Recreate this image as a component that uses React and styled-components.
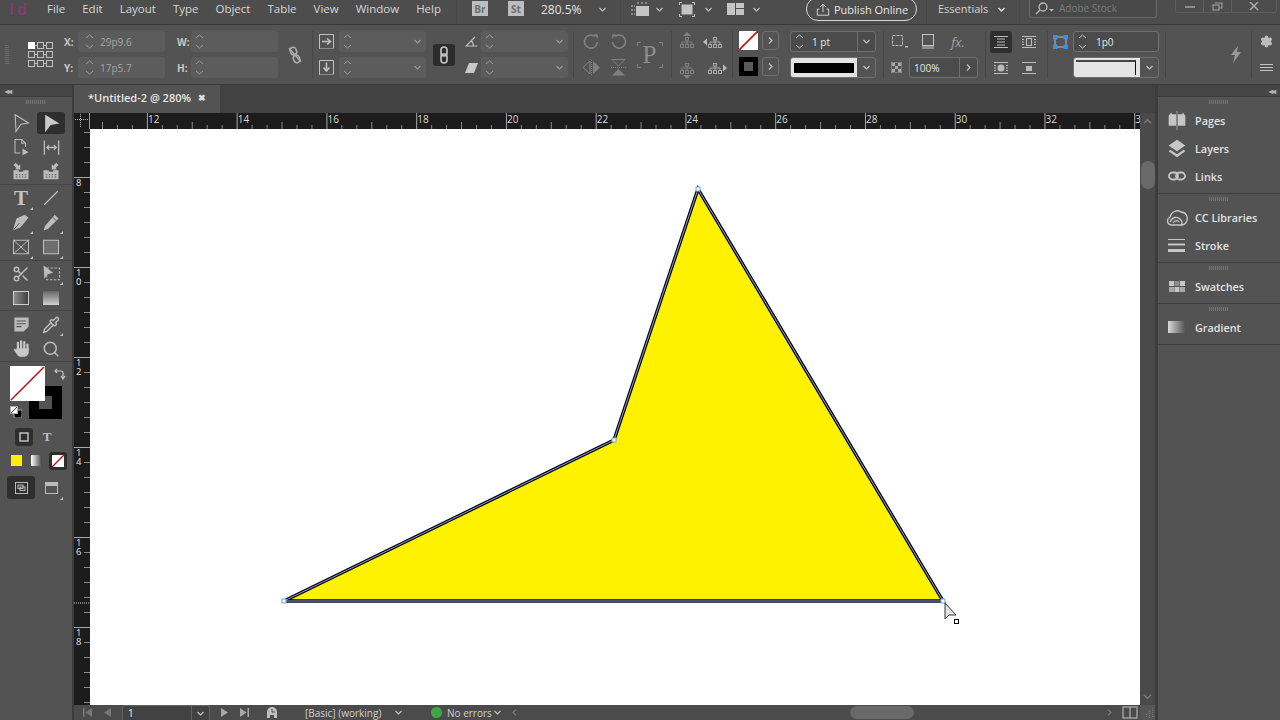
import React from "react";
import styled, { createGlobalStyle } from "styled-components";
import { Scissors, Search, Pipette, Settings } from "lucide-react";

const GlobalStyle = createGlobalStyle`
  html, body {
    margin: 0;
    height: 100%;
    overflow: hidden;
    background: #424242;
    font-family: "Open Sans", "Liberation Sans", sans-serif;
  }
  #root { height: 100%; }
`;

const Page = styled.div`
  width: 1280px;
  height: 720px;
  display: flex;
  flex-direction: column;
  background: #424242;
  overflow: hidden;
`;

/* top menu */
const MenuBar = styled.div`
  height: 24px;
  flex: none;
  display: flex;
  align-items: center;
  background: #4d4d4d;
  border-bottom: 1px solid #383838;
  overflow: hidden;
`;
const Logo = styled.div`
  width: 47px;
  flex: none;
  padding-left: 9px;
  box-sizing: border-box;
  margin-top: -6px;
  font-size: 16px;
  line-height: 1;
  font-weight: 600;
  letter-spacing: 3px;
  color: #8a3a6e;
`;
const Nav = styled.nav`
  width: 409px;
  flex: none;
  display: flex;
  gap: 17px;
  margin-top: -7px;
  font-size: 11.5px;
  color: #d6d6d6;
`;
const Cell = styled.div`
  width: ${(p) => p.$w}px;
  flex: none;
  display: flex;
  align-items: center;
  justify-content: ${(p) => p.$justify || "center"};
  margin-top: ${(p) => p.$up || 0}px;
`;
const Divider = styled.div`
  width: 1px;
  flex: none;
  align-self: stretch;
  margin: 0 ${(p) => p.$r || 0}px 0 ${(p) => p.$l || 0}px;
  background: ${(p) => p.$c || "#474747"};
`;
const AppTile = styled.div`
  width: 16px;
  height: 15px;
  flex: none;
  margin-top: -7px;
  display: flex;
  align-items: center;
  justify-content: center;
  background: #bdbdbd;
  color: #6d6d6d;
  font-size: 10px;
  font-weight: 700;
`;
const ZoomValue = styled.div`
  font-size: 12px;
  color: #e2e2e2;
  margin-top: -6px;
`;
const PublishPill = styled.div`
  width: 111px;
  height: 24px;
  flex: none;
  margin-top: -6px;
  box-sizing: border-box;
  display: flex;
  align-items: center;
  gap: 4px;
  padding-left: 9px;
  border: 1px solid #d8d8d8;
  border-radius: 13px;
  font-size: 11px;
  color: #e4e4e4;
  white-space: nowrap;
`;
const WorkspaceName = styled.div`
  width: 50px;
  flex: none;
  margin-top: -8px;
  font-size: 11px;
  color: #d2d2d2;
  white-space: nowrap;
`;
const StockSearch = styled.div`
  width: 128px;
  height: 18px;
  flex: none;
  margin-top: -7px;
  box-sizing: border-box;
  display: flex;
  align-items: center;
  gap: 4px;
  padding-left: 5px;
  border: 1px solid #6a6a6a;
  border-top: 0;
  border-radius: 0 0 3px 3px;
  background: #494949;
  font-size: 10px;
  color: #7a7a7a;
`;
const WindowButtons = styled.div`
  width: 102px;
  height: 13px;
  flex: none;
  margin-top: -11px;
  box-sizing: border-box;
  display: grid;
  grid-template-columns: 28px 28px 1fr;
  border: 1px solid #5e5e5e;
  border-top: 0;
  border-radius: 0 0 3px 3px;
`;
const WindowButton = styled.div`
  display: flex;
  align-items: center;
  justify-content: center;
  border-right: ${(p) => (p.$last ? "0" : "1px solid #5e5e5e")};
`;

/* control panel */
const ControlBar = styled.div`
  height: 60px;
  flex: none;
  box-sizing: border-box;
  display: flex;
  padding: 6px 0 6px;
  background: #535353;
  border-bottom: 1px solid #3a3a3a;
`;
const Stack = styled.div`
  width: ${(p) => p.$w}px;
  flex: none;
  display: grid;
  grid-template-rows: 21px 21px;
  row-gap: 5px;
`;
const StackItem = styled.div`
  display: flex;
  align-items: center;
  justify-content: ${(p) => p.$justify || "center"};
`;
const Span = styled.div`
  width: ${(p) => p.$w}px;
  flex: none;
  display: flex;
  align-items: center;
  justify-content: ${(p) => p.$justify || "center"};
`;
const Grip = styled.div`
  width: 4px;
  height: ${(p) => p.$h || 20}px;
  margin-left: 5px;
  background: repeating-linear-gradient(to bottom, #6b6b6b 0 1px, transparent 1px 2px);
`;
const Label = styled.div`
  width: 14px;
  font-size: 10px;
  font-weight: 700;
  color: #c8c8c8;
`;
const Field = styled.div`
  width: ${(p) => p.$w}px;
  height: 21px;
  flex: none;
  box-sizing: border-box;
  display: flex;
  align-items: center;
  margin-left: ${(p) => p.$ml || 0}px;
  background: ${(p) => (p.$outline ? "#4b4b4b" : "#5c5c5c")};
  border: ${(p) => (p.$outline ? "1px solid #6f6f6f" : "0")};
  border-radius: 3px;
  font-size: 10px;
  color: ${(p) => (p.$outline ? "#e6e6e6" : "#a5a5a5")};
`;
const SpinBox = styled.div`
  width: ${(p) => p.$w || 16}px;
  flex: none;
  align-self: stretch;
  display: flex;
  align-items: center;
  justify-content: center;
  border-right: ${(p) => (p.$split ? "1px solid #6f6f6f" : "0")};
`;
const FieldText = styled.span`
  flex: 1;
  padding-left: ${(p) => p.$pad ?? 6}px;
  white-space: nowrap;
`;
const FieldEnd = styled.div`
  width: ${(p) => p.$w || 17}px;
  flex: none;
  align-self: stretch;
  display: flex;
  align-items: center;
  justify-content: center;
  border-left: ${(p) => (p.$split ? "1px solid #6f6f6f" : "0")};
`;
const LinkButton = styled.div`
  width: 22px;
  height: 22px;
  display: flex;
  align-items: center;
  justify-content: center;
  background: #2c2c2c;
  border-radius: 3px;
`;
const ActiveIcon = styled.div`
  width: 22px;
  height: 22px;
  display: flex;
  align-items: center;
  justify-content: center;
  background: #2f2f2f;
  border-radius: 3px;
`;
const ProxyLetter = styled.div`
  position: relative;
  width: 26px;
  height: 26px;
  display: flex;
  align-items: center;
  justify-content: center;
  font-family: "Liberation Serif", serif;
  font-size: 25px;
  color: #8c8c8c;
`;
const ProxyCorners = styled.svg`
  position: absolute;
  inset: 0;
`;
const SwatchRow = styled.div`
  display: flex;
  gap: 4px;
`;
const MiniSwatch = styled.div`
  width: 19px;
  height: 19px;
  display: flex;
  align-items: center;
  justify-content: center;
  background: ${(p) => p.$bg};
`;
const InnerSquare = styled.div`
  width: 9px;
  height: 9px;
  background: #5a5a5a;
`;
const ArrowButton = styled.div`
  width: 17px;
  height: 19px;
  box-sizing: border-box;
  display: flex;
  align-items: center;
  justify-content: center;
  border: 1px solid #6f6f6f;
  border-radius: 3px;
`;
const SelectWrap = styled.div`
  width: ${(p) => p.$w}px;
  height: 21px;
  box-sizing: border-box;
  display: flex;
  border: 1px solid #6f6f6f;
  border-radius: 3px;
  overflow: hidden;
`;
const StrokePreview = styled.div`
  flex: 1;
  display: flex;
  align-items: center;
  justify-content: center;
  background: #e4e4e4;
`;
const StrokeBar = styled.div`
  width: 60px;
  height: 10px;
  background: #000;
`;
const CornerPreview = styled.div`
  flex: 1;
  margin: 0;
  background: #e4e4e4;
  position: relative;
  &::after {
    content: "";
    position: absolute;
    left: 2px;
    right: 4px;
    top: 2px;
    bottom: 2px;
    border-top: 2px solid #444;
    border-right: 1px solid #111;
  }
`;
const SelectEnd = styled.div`
  width: 18px;
  display: flex;
  align-items: center;
  justify-content: center;
`;
const RowIcons = styled.div`
  display: flex;
  align-items: center;
`;
const FxGlyph = styled.span`
  font-size: 13px;
  font-style: italic;
  color: #a0a0a0;
`;

/* body */
const Body = styled.div`
  flex: 1;
  min-height: 0;
  display: flex;
`;
const SidePanel = styled.aside`
  width: ${(p) => p.$w}px;
  flex: none;
  display: flex;
  flex-direction: column;
  background: #535353;
`;
const Gutter = styled.div`
  width: ${(p) => p.$w}px;
  flex: none;
  background: #3c3c3c;
`;
const CollapseBar = styled.div`
  height: 11px;
  flex: none;
  display: flex;
  align-items: center;
  justify-content: ${(p) => (p.$right ? "flex-end" : "flex-start")};
  padding: 0 5px;
  background: #464646;
  border-bottom: 1px solid #3c3c3c;
  font-size: 8px;
  font-weight: 700;
  letter-spacing: -1px;
  color: #b5b5b5;
`;
const DragStrip = styled.div`
  height: 10px;
  flex: none;
  display: flex;
  align-items: center;
  justify-content: center;
  &::before {
    content: "";
    width: 20px;
    height: 4px;
    background: repeating-linear-gradient(to right, #757575 0 1px, transparent 1px 2px);
  }
`;
const ToolGroup = styled.div`
  display: grid;
  grid-template-columns: 30px 30px;
  grid-auto-rows: ${(p) => p.$row || 24}px;
  padding: ${(p) => p.$top || 0}px 0 ${(p) => p.$bottom || 0}px 6px;
  border-bottom: 1px solid #454545;
`;
const Tool = styled.div`
  position: relative;
  display: flex;
  align-items: center;
  justify-content: center;
  color: #bcbcbc;
  &::after {
    content: "";
    display: ${(p) => (p.$fly ? "block" : "none")};
    position: absolute;
    right: 3px;
    bottom: 1px;
    border-left: 3px solid transparent;
    border-bottom: 3px solid #c4c4c4;
  }
`;
const ToolActive = styled.div`
  width: 28px;
  height: 22px;
  display: flex;
  align-items: center;
  justify-content: center;
  background: #2e2e2e;
  border-radius: 3px;
`;
const TypeGlyph = styled.span`
  font-family: "Liberation Serif", serif;
  font-weight: 700;
  font-size: ${(p) => p.$size || 21}px;
  line-height: 1;
  color: ${(p) => p.$c || "#c4c4c4"};
`;
const FillStroke = styled.div`
  position: relative;
  height: 60px;
  flex: none;
`;
const FillBox = styled.svg`
  position: absolute;
  left: 10px;
  top: 4px;
  z-index: 1;
`;
const StrokeBox = styled.div`
  position: absolute;
  left: 29px;
  top: 24px;
  width: 33px;
  height: 33px;
  box-sizing: border-box;
  border: 10px solid #000;
  background: #535353;
`;
const SwapIcon = styled.svg`
  position: absolute;
  left: 54px;
  top: 6px;
`;
const DefaultIcon = styled.svg`
  position: absolute;
  left: 10px;
  top: 44px;
`;
const ContainerRow = styled.div`
  height: 24px;
  flex: none;
  margin-top: 3px;
  display: grid;
  grid-template-columns: 24px 22px;
  padding-left: 12px;
`;
const ModeRow = styled.div`
  height: 24px;
  flex: none;
  display: grid;
  grid-template-columns: 20px 20px 24px;
  padding-left: 6px;
`;
const ApplyCell = styled.div`
  display: flex;
  align-items: center;
  justify-content: center;
`;
const SmallDark = styled.div`
  width: 18px;
  height: 18px;
  display: flex;
  align-items: center;
  justify-content: center;
  background: #2e2e2e;
  border-radius: 3px;
`;
const ApplySwatch = styled.div`
  width: ${(p) => p.$s || 11}px;
  height: ${(p) => p.$s || 11}px;
  box-sizing: border-box;
  background: ${(p) => p.$bg};
  border: ${(p) => (p.$edge ? "1px solid #ddd" : "0")};
`;
const ViewRow = styled.div`
  height: 26px;
  flex: none;
  margin-top: 2px;
  display: grid;
  grid-template-columns: 30px 30px;
  padding-left: 6px;
`;
const ViewActive = styled.div`
  width: 28px;
  height: 23px;
  display: flex;
  align-items: center;
  justify-content: center;
  background: #2e2e2e;
  border-radius: 3px;
`;

/* document area */
const Center = styled.main`
  flex: 1;
  min-width: 0;
  display: flex;
  flex-direction: column;
`;
const TabStrip = styled.div`
  height: 28px;
  flex: none;
  display: flex;
  background: #424242;
`;
const Tab = styled.div`
  width: 146px;
  box-sizing: border-box;
  display: flex;
  align-items: center;
  justify-content: space-between;
  padding: 0 14px 3px 14px;
  background: #535353;
  font-size: 11px;
  font-weight: 600;
  color: #e6e6e6;
  white-space: nowrap;
`;
const TabClose = styled.span`
  font-size: 9px;
  font-weight: 700;
  color: #e0e0e0;
`;
const Work = styled.div`
  flex: 1;
  min-height: 0;
  display: flex;
`;
const Stage = styled.div`
  flex: 1;
  min-width: 0;
  display: flex;
  flex-direction: column;
`;
const RulerRow = styled.div`
  height: 16px;
  flex: none;
  display: flex;
  background: #1c1c1c;
`;
const RulerCorner = styled.div`
  width: 16px;
  flex: none;
  display: flex;
  align-items: center;
  justify-content: center;
  border-right: 1px solid #9a9a9a;
  box-sizing: border-box;
`;
const CanvasRow = styled.div`
  flex: 1;
  min-height: 0;
  display: flex;
`;
const VerticalRuler = styled.svg`
  width: 16px;
  flex: none;
  background: #1c1c1c;
`;
const Canvas = styled.svg`
  flex: 1;
  min-width: 0;
  display: block;
  background: #fff;
`;
const VScroll = styled.div`
  width: 15px;
  flex: none;
  display: flex;
  flex-direction: column;
  align-items: center;
  background: #4a4a4a;
  padding: 3px 0;
  box-sizing: border-box;
  justify-content: space-between;
  position: relative;
`;
const VThumb = styled.div`
  position: absolute;
  top: 48px;
  left: 1px;
  width: 14px;
  height: 28px;
  border-radius: 7px;
  background: #696969;
`;
const BottomBar = styled.div`
  height: 15px;
  flex: none;
  display: flex;
  align-items: center;
  background: #4b4b4b;
  font-size: 10px;
  color: #d0d0d0;
`;
const PageField = styled.div`
  width: 88px;
  height: 15px;
  flex: none;
  box-sizing: border-box;
  display: flex;
  align-items: center;
  justify-content: space-between;
  padding: 0 0 0 5px;
  background: #424242;
  border: 1px solid #626262;
  border-bottom: 0;
  border-radius: 3px 3px 0 0;
  color: #eee;
`;
const PageFieldArrow = styled.div`
  width: 17px;
  align-self: stretch;
  display: flex;
  align-items: center;
  justify-content: center;
  border-left: 1px solid #626262;
`;
const StatusDot = styled.div`
  width: 11px;
  height: 11px;
  flex: none;
  border-radius: 50%;
  background: #3fa648;
`;
const StatusLabel = styled.div`
  width: ${(p) => p.$w}px;
  flex: none;
  white-space: nowrap;
`;
const HThumb = styled.div`
  width: 64px;
  height: 13px;
  flex: none;
  border-radius: 7px;
  background: #696969;
`;
const Corner = styled.div`
  width: 15px;
  flex: none;
  align-self: stretch;
  display: flex;
  align-items: center;
  justify-content: center;
  background: #565656;
`;

/* right panel */
const DockGroup = styled.div`
  flex: none;
  padding-bottom: 2px;
  border-bottom: 1px solid #3f3f3f;
`;
const DockItem = styled.div`
  height: 28px;
  box-sizing: border-box;
  padding-bottom: 2px;
  display: flex;
  align-items: center;
  font-size: 10.8px;
  font-weight: 600;
  color: #e2e2e2;
`;
const DockIcon = styled.div`
  width: 37px;
  flex: none;
  display: flex;
  align-items: center;
  justify-content: center;
`;

const GREY = "#bcbcbc";
const DIM = "#808080";

const Chev = ({ d = "down", s = 9, c = "#c4c4c4", w = 1.2 }) => {
  const pts = {
    down: "1.5,3 4.5,6 7.5,3",
    up: "1.5,6 4.5,3 7.5,6",
    right: "3,1.5 6,4.5 3,7.5",
    left: "6,1.5 3,4.5 6,7.5",
  }[d];
  return (
    <svg width={s} height={s} viewBox="0 0 9 9">
      <polyline points={pts} fill="none" stroke={c} strokeWidth={w} />
    </svg>
  );
};

const Spin = ({ c = "#9a9a9a", w }) => (
  <SpinBox $w={w}>
    <svg width="9" height="17" viewBox="0 0 9 17">
      <polyline points="1,5 4.5,2 8,5" fill="none" stroke={c} />
      <polyline points="1,12 4.5,15 8,12" fill="none" stroke={c} />
    </svg>
  </SpinBox>
);

const Svg = ({ s = 20, w, h, vb = 24, children, fill = "none", stroke = GREY, sw = 1.5 }) => (
  <svg width={w || s} height={h || s} viewBox={`0 0 ${vb} ${vb}`} fill={fill} stroke={stroke} strokeWidth={sw}>
    {children}
  </svg>
);

const RefPoint = () => {
  const at = [0, 9, 18];
  return (
    <svg width="26" height="25" viewBox="0 0 26 25" fill="none" stroke="#c0c0c0">
      {at.map((y) => (
        <line key={y} x1="0" x2="25" y1={y + 3.5} y2={y + 3.5} />
      ))}
      {at.map((y) =>
        at.map((x) => (
          <rect
            key={`${x}-${y}`}
            x={x + 0.5}
            y={y + 0.5}
            width="6"
            height="6"
            fill={x === 0 && y === 0 ? "#fff" : "#535353"}
            stroke={x === 0 && y === 0 ? "#fff" : "#c0c0c0"}
          />
        ))
      )}
    </svg>
  );
};

const ChainIcon = ({ c = "#bbb" }) => (
  <svg width="10" height="18" viewBox="0 0 10 18" fill="none" stroke={c} strokeWidth="1.6">
    <rect x="2" y="1" width="6" height="9" rx="3" />
    <rect x="2" y="8" width="6" height="9" rx="3" />
  </svg>
);

const BrokenChain = () => (
  <svg width="16" height="18" viewBox="0 0 16 18" fill="none" stroke="#adadad" strokeWidth="1.6">
    <g transform="rotate(-22 8 9)">
      <rect x="5" y="1" width="6" height="7.5" rx="3" />
      <rect x="5" y="9.5" width="6" height="7.5" rx="3" />
    </g>
    <line x1="2" y1="2" x2="14" y2="16" strokeWidth="1.3" />
  </svg>
);

const hTicks = [];
for (let x = 0; x < 1052; x += 14.96) hTicks.push(x);
const hLabels = ["12", "14", "16", "18", "20", "22", "24", "26", "28", "30", "32", "3"];

const HorizontalRuler = () => (
  <svg width="1050" height="16" viewBox="0 0 1050 16">
    {hTicks.map((x, i) => {
      const n = i % 6;
      const major = n === 3;
      const mid = n === 0;
      return (
        <line
          key={i}
          x1={x + 12.5}
          x2={x + 12.5}
          y1={major ? 0 : mid ? 9 : 12}
          y2="16"
          stroke={major ? "#a8a8a8" : "#8a8a8a"}
        />
      );
    })}
    {hLabels.map((t, i) => (
      <text key={t} x={58 + i * 89.75} y="10" fill="#d8d8d8" fontSize="10" fontFamily="Open Sans">
        {t}
      </text>
    ))}
  </svg>
);

const vMajor = [48.5, 138.5, 228.5, 318.5, 408.5, 498.5];
const vLabels = [["8"], ["1", "0"], ["1", "2"], ["1", "4"], ["1", "6"], ["1", "8"]];
const vTicks = [];
for (let y = 3.5; y < 576; y += 15) vTicks.push(y);

const RulerSide = () => (
  <VerticalRuler viewBox="0 0 16 576" height="576">
    {vTicks.map((y, i) => (
      <line key={i} x1={(i - 3) % 6 === 0 ? 7 : 10} x2="16" y1={y} y2={y} stroke="#8a8a8a" />
    ))}
    {vMajor.map((y, i) => (
      <g key={y}>
        <line x1="0" x2="16" y1={y} y2={y} stroke="#a8a8a8" />
        <text y={y + 8} fill="#e4e4e4" fontSize="9.5" fontFamily="Open Sans">
          {vLabels[i].map((d, k) => (
            <tspan key={k} x="2" dy={k === 0 ? 0 : 9}>
              {d}
            </tspan>
          ))}
        </text>
      </g>
    ))}
    <line x1="0" x2="16" y1="474" y2="474" stroke="#cfcfcf" strokeDasharray="1 1" />
  </VerticalRuler>
);

const anchors = [
  [608, 60],
  [524, 311],
  [194, 472],
  [853, 472],
];

const Drawing = () => (
  <Canvas viewBox="0 0 1050 576" preserveAspectRatio="none">
    <polygon points="608,60 524,311 194,472 853,472" fill="#fff200" stroke="#060614" strokeWidth="3.4" strokeLinejoin="miter" />
    <polygon points="608,60 524,311 194,472 853,472" fill="none" stroke="#8a9bd4" strokeWidth="1" />
    {anchors.map(([x, y]) => (
      <rect key={x} x={x - 2} y={y - 2} width="4" height="4" fill="#fff" stroke="#6fa8e8" strokeWidth="1" />
    ))}
    <polygon points="855,474 855,490 859,486 866,486" fill="#e2e2e2" stroke="#333" strokeWidth="1" />
    <rect x="864.5" y="490.5" width="4" height="4" fill="#fff" stroke="#000" strokeWidth="1" />
  </Canvas>
);

const PanelEntries = [
  [
    [
      "Pages",
      <Svg s={20} fill="#c6c6c6" stroke="none">
        <path d="M2 7 L5 3 L6 5 L11 5 L11 19 L2 19 Z M13 5 L18 5 L19 3 L22 7 L22 19 L13 19 Z" />
        <rect x="11.6" y="1" width="0.8" height="23" fill="#c6c6c6" />
      </Svg>,
    ],
    [
      "Layers",
      <Svg s={20} fill="#c6c6c6" stroke="none">
        <path d="M12 2 L22 9 L12 16 L2 9 Z" />
        <path d="M4 14 L12 19.5 L20 14 L22 16 L12 23 L2 16 Z" />
      </Svg>,
    ],
    [
      "Links",
      <svg width="18" height="10" viewBox="0 0 18 10" fill="none" stroke="#c6c6c6" strokeWidth="1.8">
        <rect x="1" y="1.5" width="9" height="7" rx="3.5" />
        <rect x="8" y="1.5" width="9" height="7" rx="3.5" />
      </svg>,
    ],
  ],
  [
    [
      "CC Libraries",
      <svg width="22" height="17" viewBox="0 0 22 17" fill="none" stroke="#c6c6c6" strokeWidth="1.3">
        <path d="M6 16 C1 16 0 10 4 8 C5 3 11 0 15 3 C20 3 22 8 21 11 C20 15 17 16 15 16 Z" />
        <path d="M4 13 C6 8 11 7 14 10 C16 12 17 14 15 16" />
        <path d="M7 14 C9 11 12 11 13 13" />
      </svg>,
    ],
    [
      "Stroke",
      <svg width="17" height="13" viewBox="0 0 17 13" fill="#c6c6c6">
        <rect width="17" height="1" />
        <rect y="4.5" width="17" height="2" />
        <rect y="10" width="17" height="3" />
      </svg>,
    ],
  ],
  [
    [
      "Swatches",
      <svg width="16" height="11" viewBox="0 0 16 11" fill="#c6c6c6">
        <rect width="5" height="5" />
        <rect x="5.5" width="5" height="5" fill="#8d8d8d" />
        <rect x="11" width="5" height="5" />
        <rect y="6" width="5" height="5" fill="#a8a8a8" />
        <rect x="5.5" y="6" width="5" height="5" />
        <rect x="11" y="6" width="5" height="5" fill="#a8a8a8" />
      </svg>,
    ],
  ],
  [
    [
      "Gradient",
      <svg width="17" height="12" viewBox="0 0 17 12">
        <defs>
          <linearGradient id="panelGrad">
            <stop offset="0" stopColor="#d8d8d8" />
            <stop offset="1" stopColor="#555" />
          </linearGradient>
        </defs>
        <rect width="17" height="12" fill="url(#panelGrad)" />
      </svg>,
    ],
  ],
];

const OrgIcon = ({ side }) => {
  const c = side === "left" || side === "right" ? "#a8a8a8" : DIM;
  return (
    <svg width="24" height="22" viewBox="0 0 24 22" fill="none" stroke={c}>
      <path d="M12 9 V11 M7 13 V11 H17 V13 M12 11 V13" />
      <rect x="10.5" y="6.5" width="3" height="2.5" />
      <rect x="5.5" y="13.5" width="3" height="3" />
      <rect x="10.5" y="13.5" width="3" height="3" />
      <rect x="15.5" y="13.5" width="3" height="3" />
      {side === "up" && <path d="M12 1 L16 5 H8Z" fill={c} stroke="none" />}
      {side === "down" && <path d="M12 22 L16 18 H8Z" fill={c} stroke="none" />}
      {side === "left" && <path d="M0 11 L4 7.5 V14.5Z" fill={GREY} stroke="none" />}
      {side === "right" && <path d="M24 11 L20 7.5 V14.5Z" fill={GREY} stroke="none" />}
    </svg>
  );
};

const AlignLines = ({ children }) => (
  <svg width="16" height="14" viewBox="0 0 16 14" fill="none" stroke="#bdbdbd">
    {children}
  </svg>
);

const HandIcon = () => (
  <svg width="19" height="19" viewBox="0 0 24 24" fill="#c8c8c8" stroke="#c8c8c8" strokeLinecap="round">
    <path d="M7.5 13 V5 M11.5 12 V3 M15.5 12 V4 M19.5 13 V7" fill="none" strokeWidth="2.8" />
    <path d="M6 12 H21 V16 Q20.5 22.5 14 22.5 H11 Q8 22.5 6 19 L2.5 13.5 Q3.5 11.5 6 13.5 Z" strokeWidth="0.5" />
  </svg>
);

export default function App() {
  return (
    <Page>
      <GlobalStyle />
      <MenuBar>
        <Logo>Id</Logo>
        <Nav>
          {["File", "Edit", "Layout", "Type", "Object", "Table", "View", "Window", "Help"].map((m) => (
            <span key={m}>{m}</span>
          ))}
        </Nav>
        <Divider />
        <Cell $w={15} />
        <AppTile>Br</AppTile>
        <Cell $w={20} />
        <AppTile>St</AppTile>
        <Cell $w={17} />
        <Cell $w={44} $justify="flex-start">
          <ZoomValue>280.5%</ZoomValue>
        </Cell>
        <Cell $w={35} $up={-6}>
          <Chev />
        </Cell>
        <Divider />
        <Cell $w={9} />
        <Cell $w={20} $up={-6}>
          <svg width="20" height="16" viewBox="0 0 20 16" fill="#c4c4c4">
            <rect x="6" y="5" width="13" height="10" />
            <path d="M1 5 H5 M1 9 H5 M1 13 H5 M8 1 V3 M12 1 V3 M16 1 V3" stroke="#c4c4c4" strokeDasharray="2 1" />
          </svg>
        </Cell>
        <Cell $w={18} $up={-6}>
          <Chev />
        </Cell>
        <Cell $w={9} />
        <Cell $w={20} $up={-6}>
          <svg width="16" height="15" viewBox="0 0 16 15" fill="#c4c4c4" stroke="#c4c4c4">
            <rect x="2.5" y="2.5" width="11" height="10" stroke="none" />
            <path d="M0.5 3 V0.5 H3 M13 0.5 H15.5 V3 M0.5 12 V14.5 H3 M13 14.5 H15.5 V12" fill="none" />
          </svg>
        </Cell>
        <Cell $w={22} $up={-6}>
          <Chev />
        </Cell>
        <Cell $w={6} />
        <Cell $w={20} $up={-6}>
          <svg width="17" height="12" viewBox="0 0 17 12" fill="#c4c4c4">
            <rect width="8" height="12" />
            <rect x="9" width="8" height="5" />
            <rect x="9" y="6" width="8" height="6" />
          </svg>
        </Cell>
        <Cell $w={22} $up={-6}>
          <Chev />
        </Cell>
        <Cell $w={39} />
        <PublishPill>
          <svg width="14" height="13" viewBox="0 0 16 14" fill="none" stroke="#e4e4e4">
            <path d="M4 6.5 H1.5 V13.5 H14.5 V6.5 H12 M8 10 V1 M5 4 L8 1 L11 4" />
          </svg>
          Publish Online
        </PublishPill>
        <Cell $w={9} />
        <Divider />
        <Cell $w={11} />
        <WorkspaceName>Essentials</WorkspaceName>
        <Cell $w={26} $up={-6}>
          <Chev c="#ddd" w={1.5} />
        </Cell>
        <Cell $w={5} />
        <Divider />
        <Cell $w={9} />
        <StockSearch>
          <svg width="20" height="13" viewBox="0 0 20 13" fill="none" stroke="#bbb" strokeWidth="1.3">
            <circle cx="8" cy="5" r="4" />
            <path d="M5 8 L1 12" />
            <path d="M14 7 H19 L16.5 9.5Z" fill="#bbb" stroke="none" />
          </svg>
          Adobe Stock
        </StockSearch>
        <Cell $w={18} />
        <WindowButtons>
          <WindowButton>
            <svg width="10" height="10" viewBox="0 0 10 10" fill="#8c8c8c">
              <rect y="5" width="10" height="2" />
            </svg>
          </WindowButton>
          <WindowButton>
            <svg width="11" height="9" viewBox="0 0 11 9" fill="none" stroke="#9c9c9c" strokeWidth="1.2">
              <rect x="1" y="3" width="6" height="5" />
              <path d="M3 1 H10 V6 H7" />
            </svg>
          </WindowButton>
          <WindowButton $last>
            <svg width="10" height="9" viewBox="0 0 10 9" fill="none" stroke="#a8a8a8" strokeWidth="1.6">
              <path d="M1 0 L9 8 M9 0 L1 8" />
            </svg>
          </WindowButton>
        </WindowButtons>
      </MenuBar>

      <ControlBar>
        <Span $w={28} $justify="flex-start">
          <Grip $h={20} />
        </Span>
        <Span $w={36} $justify="flex-start">
          <RefPoint />
        </Span>
        <Stack $w={14}>
          <StackItem $justify="flex-start"><Label>X:</Label></StackItem>
          <StackItem $justify="flex-start"><Label>Y:</Label></StackItem>
        </Stack>
        <Stack $w={87}>
          <Field $w={87}><Spin w={22} /><FieldText $pad={0}>29p9.6</FieldText></Field>
          <Field $w={87}><Spin w={22} /><FieldText $pad={0}>17p5.7</FieldText></Field>
        </Stack>
        <Span $w={12} />
        <Stack $w={14}>
          <StackItem $justify="flex-start"><Label>W:</Label></StackItem>
          <StackItem $justify="flex-start"><Label>H:</Label></StackItem>
        </Stack>
        <Stack $w={87}>
          <Field $w={87}><Spin /></Field>
          <Field $w={87}><Spin /></Field>
        </Stack>
        <Span $w={34}>
          <BrokenChain />
        </Span>
        <Divider />
        <Stack $w={26}>
          <StackItem>
            <svg width="15" height="15" viewBox="0 0 15 15" fill="none" stroke="#c0c0c0">
              <path d="M0.5 14.5 V0.5 H14.5 V14.5" />
              <path d="M0.5 14.5 H14.5" strokeDasharray="1 1" />
              <path d="M3 7.5 H11 M8 4.5 L11.5 7.5 L8 10.5" strokeWidth="1.6" />
            </svg>
          </StackItem>
          <StackItem>
            <svg width="15" height="15" viewBox="0 0 15 15" fill="none" stroke="#c0c0c0">
              <path d="M0.5 14.5 V0.5 H14.5 V14.5" />
              <path d="M0.5 14.5 H14.5" strokeDasharray="1 1" />
              <path d="M7.5 2.5 V10 M4.5 7.5 L7.5 11 L10.5 7.5" strokeWidth="1.6" />
            </svg>
          </StackItem>
        </Stack>
        <Stack $w={87}>
          <Field $w={87}><Spin /><FieldText /><FieldEnd><Chev c="#9a9a9a" /></FieldEnd></Field>
          <Field $w={87}><Spin /><FieldText /><FieldEnd><Chev c="#9a9a9a" /></FieldEnd></Field>
        </Stack>
        <Span $w={35}>
          <LinkButton>
            <ChainIcon c="#c8c8c8" />
          </LinkButton>
        </Span>
        <Stack $w={20}>
          <StackItem>
            <svg width="13" height="11" viewBox="0 0 13 11" fill="none" stroke="#bdbdbd" strokeWidth="1.2">
              <path d="M10 1 L1 10 H12.5 M6.5 5 A5 5 0 0 1 8 10" />
            </svg>
          </StackItem>
          <StackItem>
            <svg width="13" height="10" viewBox="0 0 13 10" fill="#c8c8c8">
              <path d="M4 0 H13 L9 10 H0 Z" />
            </svg>
          </StackItem>
        </Stack>
        <Stack $w={87}>
          <Field $w={87}><Spin /><FieldText /><FieldEnd><Chev c="#9a9a9a" /></FieldEnd></Field>
          <Field $w={87}><Spin /><FieldText /><FieldEnd><Chev c="#9a9a9a" /></FieldEnd></Field>
        </Stack>
        <Divider $l={5} />
        <Stack $w={34}>
          <StackItem>
            <svg width="17" height="17" viewBox="0 0 17 17" fill="none" stroke={DIM} strokeWidth="1.6">
              <path d="M14.5 9 A6.5 6.5 0 1 1 12 3.5" />
              <path d="M11 1 L15 1.5 L14.5 6Z" fill={DIM} stroke="none" />
            </svg>
          </StackItem>
          <StackItem>
            <svg width="17" height="15" viewBox="0 0 17 15" fill={DIM}>
              <path d="M7 1 V14 L0 7.5Z" fill="none" stroke={DIM} />
              <path d="M10 1 V14 L17 7.5Z" />
              <path d="M8.5 0 V15" stroke={DIM} strokeDasharray="1 1" />
            </svg>
          </StackItem>
        </Stack>
        <Stack $w={20}>
          <StackItem>
            <svg width="17" height="17" viewBox="0 0 17 17" fill="none" stroke={DIM} strokeWidth="1.6">
              <path d="M2.5 9 A6.5 6.5 0 1 0 5 3.5" />
              <path d="M6 1 L2 1.5 L2.5 6Z" fill={DIM} stroke="none" />
            </svg>
          </StackItem>
          <StackItem>
            <svg width="15" height="17" viewBox="0 0 15 17" fill={DIM}>
              <path d="M1 0.5 H14 L7.5 7Z" fill="none" stroke={DIM} />
              <path d="M1 16.5 H14 L7.5 10Z" />
              <path d="M0 8.5 H15" stroke={DIM} strokeDasharray="1 1" />
            </svg>
          </StackItem>
        </Stack>
        <Span $w={43}>
          <ProxyLetter>
            P
            <ProxyCorners width="26" height="26" viewBox="0 0 26 26" fill="none" stroke={DIM}>
              <path d="M0.5 4 V0.5 H4 M22 0.5 H25.5 V4 M0.5 22 V25.5 H4 M22 25.5 H25.5 V22" />
            </ProxyCorners>
          </ProxyLetter>
        </Span>
        <Divider />
        <Stack $w={30}>
          <StackItem><OrgIcon side="up" /></StackItem>
          <StackItem><OrgIcon side="down" /></StackItem>
        </Stack>
        <Stack $w={26}>
          <StackItem><OrgIcon side="left" /></StackItem>
          <StackItem><OrgIcon side="right" /></StackItem>
        </Stack>
        <Divider $l={4} $r={6} />
        <Stack $w={40}>
          <SwatchRow>
            <MiniSwatch $bg="#fff">
              <svg width="19" height="19" viewBox="0 0 19 19">
                <line x1="0" y1="19" x2="19" y2="0" stroke="#c0181e" strokeWidth="1.8" />
              </svg>
            </MiniSwatch>
            <ArrowButton><Chev d="right" /></ArrowButton>
          </SwatchRow>
          <SwatchRow>
            <MiniSwatch $bg="#000"><InnerSquare /></MiniSwatch>
            <ArrowButton><Chev d="right" /></ArrowButton>
          </SwatchRow>
        </Stack>
        <Span $w={11} />
        <Stack $w={86}>
          <Field $w={86} $outline>
            <Spin w={17} c="#c8c8c8" />
            <FieldText $pad={4}>1 pt</FieldText>
            <FieldEnd $split><Chev /></FieldEnd>
          </Field>
          <SelectWrap $w={86}>
            <StrokePreview><StrokeBar /></StrokePreview>
            <SelectEnd><Chev /></SelectEnd>
          </SelectWrap>
        </Stack>
        <Divider $l={7} />
        <Stack $w={101}>
          <RowIcons>
            <Span $w={30}>
              <svg width="17" height="15" viewBox="0 0 17 15" fill="none" stroke="#b8b8b8">
                <rect x="1.5" y="1.5" width="10" height="10" strokeDasharray="3 1" />
                <rect x="14" y="12" width="3" height="1.5" fill="#b8b8b8" stroke="none" />
              </svg>
            </Span>
            <Span $w={29}>
              <svg width="15" height="17" viewBox="0 0 15 17" fill="none" stroke="#c4c4c4">
                <rect x="1.5" y="1.5" width="11" height="11" />
                <rect x="1" y="13" width="12" height="3" fill="#8c8c8c" stroke="none" />
              </svg>
            </Span>
            <Span $w={30}>
              <FxGlyph>fx.</FxGlyph>
            </Span>
          </RowIcons>
          <RowIcons>
            <Span $w={24}>
              <svg width="11" height="11" viewBox="0 0 11 11" fill="#a8a8a8">
                <rect width="11" height="11" fill="none" stroke="#a8a8a8" />
                <rect x="1" y="1" width="3" height="3" />
                <rect x="7" y="1" width="3" height="3" />
                <rect x="4" y="4" width="3" height="3" />
                <rect x="1" y="7" width="3" height="3" />
                <rect x="7" y="7" width="3" height="3" />
              </svg>
            </Span>
            <Field $w={69} $outline $ml={1}>
              <FieldText $pad={4}>100%</FieldText>
              <FieldEnd $split><Chev d="right" /></FieldEnd>
            </Field>
          </RowIcons>
        </Stack>
        <Divider />
        <Stack $w={30}>
          <StackItem>
            <ActiveIcon>
              <AlignLines>
                <path d="M1 1.5 H15 M1 12.5 H15 M4 4 H12 M4 7 H12 M4 10 H12" />
              </AlignLines>
            </ActiveIcon>
          </StackItem>
          <StackItem>
            <AlignLines>
              <path d="M1 1.5 H15 M1 12.5 H15 M1 4.5 H3 M1 7 H3 M1 9.5 H3 M13 4.5 H15 M13 7 H15 M13 9.5 H15" />
              <circle cx="8" cy="7" r="3.5" fill="#bbb" stroke="none" />
            </AlignLines>
          </StackItem>
        </Stack>
        <Stack $w={26}>
          <StackItem>
            <AlignLines>
              <path d="M1 1.5 H15 M1 12.5 H15 M1 4.5 H3 M1 7 H3 M1 9.5 H3 M13 4.5 H15 M13 7 H15 M13 9.5 H15" />
              <rect x="5.5" y="3.5" width="5" height="7" />
            </AlignLines>
          </StackItem>
          <StackItem>
            <AlignLines>
              <path d="M1 1.5 H15 M1 12.5 H15" />
              <rect x="5" y="5" width="6" height="5" fill="#bbb" stroke="none" />
            </AlignLines>
          </StackItem>
        </Stack>
        <Divider $l={5} />
        <Stack $w={25}>
          <StackItem>
            <svg width="15" height="14" viewBox="0 0 15 14" fill="#3d8fdc">
              <path d="M4 2 H11 M4 12 H11 M2 4 V10 M13 4 V10" stroke="#bdbdbd" fill="none" />
              <rect x="0" y="0" width="4.5" height="4.5" />
              <rect x="10.5" y="0" width="4.5" height="4.5" />
              <rect x="0" y="9.5" width="4.5" height="4.5" />
              <rect x="10.5" y="9.5" width="4.5" height="4.5" />
            </svg>
          </StackItem>
          <StackItem />
        </Stack>
        <Stack $w={86}>
          <Field $w={86} $outline>
            <Spin w={17} c="#c8c8c8" />
            <FieldText $pad={5}>1p0</FieldText>
          </Field>
          <SelectWrap $w={86}>
            <CornerPreview />
            <SelectEnd><Chev /></SelectEnd>
          </SelectWrap>
        </Stack>
        <Divider $l={6} />
        <Span $w={55} />
        <Span $w={30}>
          <svg width="12" height="17" viewBox="0 0 12 17" fill="#9a9a9a">
            <path d="M8 0 L1 9 H5 L3 17 L11 6 H7 Z" />
          </svg>
        </Span>
        <Divider />
        <Stack $w={28}>
          <StackItem>
            <Settings size={13} color="#bdbdbd" fill="#bdbdbd" />
          </StackItem>
          <StackItem>
            <svg width="13" height="8" viewBox="0 0 13 8" stroke="#c4c4c4">
              <path d="M0 0.5 H13 M0 3.5 H13 M0 6.5 H13" />
            </svg>
          </StackItem>
        </Stack>
      </ControlBar>

      <Body>
        <SidePanel $w={72}>
          <CollapseBar>◂◂</CollapseBar>
          <DragStrip />
          <ToolGroup $top={4} $bottom={1}>
            <Tool>
              <Svg s={20} sw={1.3}><path d="M5 2 L21 12 L12 13.5 L6 22 Z" /></Svg>
            </Tool>
            <Tool>
              <ToolActive>
                <Svg s={19} fill="#c8c8c8" stroke="none"><path d="M4 1 L22 12 L11 14 L4 23 Z" /></Svg>
              </ToolActive>
            </Tool>
            <Tool>
              <Svg s={18} sw={1.4}>
                <path d="M4 2 H13 L18 7 V12 M4 2 V20 H11 M13 2 V7 H18" />
                <path d="M14 14 L22 19 L14 23 Z" fill={GREY} stroke="none" />
              </Svg>
            </Tool>
            <Tool>
              <Svg s={19} sw={1.6}>
                <path d="M3 3 V21 M21 3 V21 M6 12 H18 M9 9 L6 12 L9 15 M15 9 L18 12 L15 15" />
              </Svg>
            </Tool>
            <Tool>
              <Svg s={18} fill={GREY} stroke="none">
                <path d="M2 11 H9 V13 H15 V11 H22 V23 H2 Z M5 1 L9 5 L11 3 L11 10 L4 10 L6 8 L2 4 Z" />
                <path d="M5 17 H19 M5 20 H19" stroke="#535353" strokeWidth="1.5" strokeDasharray="2 2" />
              </Svg>
            </Tool>
            <Tool>
              <Svg s={18} fill={GREY} stroke="none">
                <path d="M2 11 H9 V13 H15 V11 H22 V23 H2 Z M19 1 L15 5 L13 3 L13 10 L20 10 L18 8 L22 4 Z" />
                <path d="M5 17 H19 M5 20 H19" stroke="#535353" strokeWidth="1.5" strokeDasharray="2 2" />
              </Svg>
            </Tool>
          </ToolGroup>
          <ToolGroup $row={24.5} $top={1}>
            <Tool $fly><TypeGlyph>T</TypeGlyph></Tool>
            <Tool>
              <Svg s={18} sw={1.6}><line x1="3" y1="21" x2="21" y2="3" /></Svg>
            </Tool>
            <Tool $fly>
              <Svg s={18} fill={GREY} stroke="none">
                <path d="M22 5 L17 1 L6 6 L1 22 L11 18 L17 11 Z" />
                <path d="M2 21 L10 12" stroke="#535353" strokeWidth="1.3" />
              </Svg>
            </Tool>
            <Tool $fly>
              <Svg s={18} fill={GREY} stroke="none">
                <path d="M17 1 L22 6 L8 20 L2 22 L4 16 Z" />
                <path d="M14 4 L19 9" stroke="#535353" strokeWidth="1.2" />
              </Svg>
            </Tool>
            <Tool $fly>
              <Svg s={18} sw={1.3}>
                <rect x="2" y="3" width="20" height="18" />
                <path d="M2 3 L22 21 M22 3 L2 21" />
              </Svg>
            </Tool>
            <Tool $fly>
              <Svg s={18} fill="#6e6e6e" sw={1.4}>
                <rect x="2" y="3" width="20" height="18" />
              </Svg>
            </Tool>
          </ToolGroup>
          <ToolGroup $top={1}>
            <Tool><Scissors size={18} color={GREY} /></Tool>
            <Tool $fly>
              <Svg s={19} sw={1.3}>
                <rect x="6" y="5" width="16" height="15" strokeDasharray="3 2" />
                <path d="M2 2 L14 11 L7 13 L3 19 Z" fill={GREY} stroke="none" />
              </Svg>
            </Tool>
            <Tool>
              <svg width="16" height="14" viewBox="0 0 16 14">
                <defs>
                  <linearGradient id="toolGrad">
                    <stop offset="0" stopColor="#8c8c8c" />
                    <stop offset="1" stopColor="#3f3f3f" />
                  </linearGradient>
                </defs>
                <rect x="0.5" y="0.5" width="15" height="13" fill="url(#toolGrad)" stroke="#ccc" />
              </svg>
            </Tool>
            <Tool>
              <svg width="16" height="14" viewBox="0 0 16 14">
                <defs>
                  <linearGradient id="featherGrad" x1="0" y1="0" x2="0" y2="1">
                    <stop offset="0" stopColor="#666" />
                    <stop offset="1" stopColor="#d0d0d0" />
                  </linearGradient>
                </defs>
                <rect width="16" height="14" fill="url(#featherGrad)" />
              </svg>
            </Tool>
          </ToolGroup>
          <ToolGroup $top={2} $bottom={0}>
            <Tool>
              <Svg s={17} fill={GREY} stroke="none">
                <path d="M2 2 H22 V15 L15 22 H2 Z" />
                <path d="M5 7 H18 M5 11 H18 M5 15 H12" stroke="#535353" strokeWidth="1.5" />
              </Svg>
            </Tool>
            <Tool $fly><Pipette size={18} color={GREY} /></Tool>
            <Tool><HandIcon /></Tool>
            <Tool><Search size={18} color={GREY} /></Tool>
          </ToolGroup>
          <FillStroke>
            <StrokeBox />
            <FillBox width="35" height="35" viewBox="0 0 35 35">
              <rect width="35" height="35" fill="#fff" />
              <line x1="1" y1="34" x2="34" y2="1" stroke="#c3161c" strokeWidth="1.6" />
            </FillBox>
            <SwapIcon width="12" height="12" viewBox="0 0 12 12" fill="none" stroke="#c4c4c4" strokeWidth="1.2">
              <path d="M3 1 L1 3 L3 5 M1 3 H7 Q9 3 9 5 V10 M7 8 L9 11 L11 8" />
            </SwapIcon>
            <DefaultIcon width="12" height="12" viewBox="0 0 12 12">
              <rect x="4" y="4" width="8" height="8" fill="#000" stroke="#aaa" />
              <rect x="0.5" y="0.5" width="7" height="7" fill="#fff" stroke="#aaa" />
              <line x1="1" y1="7" x2="7" y2="1" stroke="#c3161c" />
            </DefaultIcon>
          </FillStroke>
          <ContainerRow>
            <ApplyCell>
              <SmallDark>
                <svg width="10" height="10" viewBox="0 0 10 10" fill="none" stroke="#c8c8c8" strokeWidth="1.4">
                  <rect x="1" y="1" width="8" height="8" />
                </svg>
              </SmallDark>
            </ApplyCell>
            <ApplyCell><TypeGlyph $size={13} $c="#c0c0c0">T</TypeGlyph></ApplyCell>
          </ContainerRow>
          <ModeRow>
            <ApplyCell><ApplySwatch $bg="#fff200" /></ApplyCell>
            <ApplyCell><ApplySwatch $bg="linear-gradient(to right,#fff,#444)" /></ApplyCell>
            <ApplyCell>
              <SmallDark>
                <svg width="12" height="12" viewBox="0 0 12 12">
                  <rect width="12" height="12" fill="#fff" />
                  <line x1="0" y1="12" x2="12" y2="0" stroke="#c3161c" strokeWidth="1.4" />
                </svg>
              </SmallDark>
            </ApplyCell>
          </ModeRow>
          <ViewRow>
            <ApplyCell>
              <ViewActive>
                <svg width="13" height="12" viewBox="0 0 13 12" fill="none" stroke="#bbb">
                  <rect x="0.5" y="0.5" width="12" height="11" />
                  <rect x="3" y="3" width="5" height="3.5" />
                  <rect x="5" y="5" width="5" height="3.5" />
                </svg>
              </ViewActive>
            </ApplyCell>
            <Tool $fly>
              <svg width="13" height="12" viewBox="0 0 13 12" fill="none" stroke="#bbb">
                <rect x="0.5" y="0.5" width="12" height="11" />
                <rect x="1" y="1" width="11" height="3" fill="#bbb" stroke="none" />
              </svg>
            </Tool>
          </ViewRow>
        </SidePanel>
        <Gutter $w={2} />

        <Center>
          <TabStrip>
            <Tab>
              *Untitled-2 @ 280%
              <TabClose>✖</TabClose>
            </Tab>
          </TabStrip>
          <Work>
            <Stage>
              <RulerRow>
                <RulerCorner>
                  <svg width="14" height="14" viewBox="0 0 14 14" stroke="#bbb" strokeDasharray="1 1">
                    <path d="M0 5.5 H14 M5.5 0 V14" />
                  </svg>
                </RulerCorner>
                <HorizontalRuler />
              </RulerRow>
              <CanvasRow>
                <RulerSide />
                <Drawing />
              </CanvasRow>
            </Stage>
            <VScroll>
              <Chev d="up" s={11} c="#777" />
              <VThumb />
              <Chev d="down" s={11} c="#777" />
            </VScroll>
          </Work>
          <BottomBar>
            <Cell $w={7} />
            <Cell $w={12}>
              <svg width="9" height="9" viewBox="0 0 9 9" fill="#777">
                <rect x="0" y="0" width="1.5" height="9" />
                <path d="M9 0 V9 L2.5 4.5Z" />
              </svg>
            </Cell>
            <Cell $w={8} />
            <Cell $w={12}>
              <svg width="7" height="9" viewBox="0 0 7 9" fill="#777"><path d="M7 0 V9 L0 4.5Z" /></svg>
            </Cell>
            <Cell $w={9} />
            <PageField>
              1
              <PageFieldArrow><Chev /></PageFieldArrow>
            </PageField>
            <Cell $w={8} />
            <Cell $w={12}>
              <svg width="7" height="9" viewBox="0 0 7 9" fill="#a8a8a8"><path d="M0 0 V9 L7 4.5Z" /></svg>
            </Cell>
            <Cell $w={8} />
            <Cell $w={12}>
              <svg width="9" height="9" viewBox="0 0 9 9" fill="#a8a8a8">
                <path d="M0 0 V9 L6.5 4.5Z" />
                <rect x="7.5" y="0" width="1.5" height="9" />
              </svg>
            </Cell>
            <Cell $w={16} />
            <Cell $w={14}>
              <svg width="14" height="13" viewBox="0 0 14 13" fill="#c0c0c0">
                <path d="M1 12 V6 A5 5 0 0 1 11 6 V12 H8 V9 H4 V12 Z" />
                <path d="M6 3 V6 H9" stroke="#4b4b4b" fill="none" />
              </svg>
            </Cell>
            <Cell $w={25} />
            <StatusLabel $w={77}>[Basic] (working)</StatusLabel>
            <Cell $w={32}><Chev /></Cell>
            <Cell $w={17} />
            <StatusDot />
            <Cell $w={5} />
            <StatusLabel $w={43}>No errors</StatusLabel>
            <Cell $w={14}><Chev /></Cell>
            <Cell $w={5} />
            <Cell $w={10}><Chev d="left" c="#777" /></Cell>
            <Cell $w={331} />
            <HThumb />
            <Cell $w={190} />
            <Cell $w={10}><Chev d="right" c="#777" /></Cell>
            <Cell $w={8} />
            <svg width="16" height="13" viewBox="0 0 16 13" fill="none" stroke="#aaa" strokeWidth="1.3">
              <rect x="1" y="1" width="14" height="11" />
              <path d="M8 1 V12" />
            </svg>
            <Cell $w={2} />
            <Corner>
              <svg width="10" height="10" viewBox="0 0 10 10" stroke="#777" strokeDasharray="1 1">
                <path d="M9.5 0 V10 M6.5 3 V10 M3.5 6 V10" />
              </svg>
            </Corner>
          </BottomBar>
        </Center>

        <Gutter $w={3} />
        <SidePanel $w={122}>
          <CollapseBar $right>◂◂</CollapseBar>
          {PanelEntries.map((group, i) => (
            <DockGroup key={i}>
              <DragStrip />
              {group.map(([label, icon]) => (
                <DockItem key={label}>
                  <DockIcon>{icon}</DockIcon>
                  {label}
                </DockItem>
              ))}
            </DockGroup>
          ))}
        </SidePanel>
      </Body>
    </Page>
  );
}
